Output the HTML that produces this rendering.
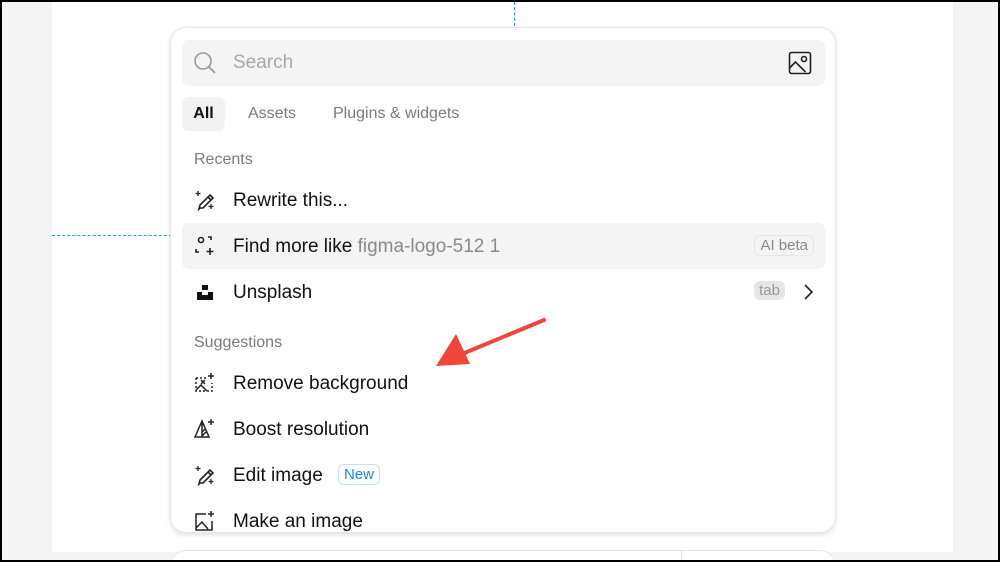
<!DOCTYPE html>
<html><head><meta charset="utf-8"><style>
*{margin:0;padding:0;box-sizing:border-box}
body{width:1000px;height:562px;overflow:hidden;background:#000;font-family:"Liberation Sans",sans-serif;position:relative}
.frame{position:absolute;left:2px;top:2px;width:996px;height:558px;background:#f4f4f4;overflow:hidden}
.white{position:absolute;left:50px;top:0;width:901px;height:550px;background:#fff}
.vd{position:absolute;left:512px;top:0;height:24px;border-left:1px dashed #1e9bf0}
.hd{position:absolute;left:50px;top:233px;width:120px;height:0;border-top:1px dashed #1e9bf0}
.card{position:absolute;left:168px;top:25px;width:666px;height:506px;background:#fff;border-radius:16px;border:1px solid #e6e6e6;box-shadow:0 2px 6px rgba(0,0,0,.12)}
.card2{position:absolute;left:168px;top:548px;width:666px;height:40px;background:#fff;border-radius:16px;border:1px solid #e6e6e6}
.card2:after{content:"";position:absolute;left:510px;top:0;height:40px;border-left:1px solid #e0e0e0}
.search{position:absolute;left:11px;top:12px;width:643px;height:46px;background:#f4f4f4;border-radius:7px}
.search .ph{position:absolute;left:51px;top:12px;font-size:19px;color:#a8a8a8}
.tabs{position:absolute;left:11px;top:69px;height:34px;width:400px}
.tab{position:absolute;top:0;height:34px;line-height:34px;font-size:16px;color:#7a7a7a;white-space:nowrap}
.all{left:0;width:43px;background:#f2f2f2;border-radius:7px;text-align:center;color:#111;font-weight:bold}
.sec{position:absolute;left:23px;font-size:16px;color:#7a7a7a}
.row{position:absolute;left:11px;width:643px;height:46px;border-radius:7px}
.row .t{position:absolute;left:51px;top:13px;font-size:19px;color:#111;white-space:nowrap}
.row svg{position:absolute;left:12px;top:12px}
.gray{color:#8a8a8a}
.badge{position:absolute;font-size:15px;border-radius:6px;padding:1px 5px}
</style></head><body><div class="frame">
<div class="white"></div>
<div class="vd"></div><div class="hd"></div>
<div class="card">
 <div class="search">
  <svg style="position:absolute;left:11px;top:11px" width="24" height="24" viewBox="0 0 24 24" fill="none" stroke="#999" stroke-width="1.6"><circle cx="10" cy="10" r="8"/><path d="M16 16l6 6"/></svg>
  <span class="ph">Search</span>
  <svg style="position:absolute;right:13px;top:11px" width="24" height="24" viewBox="0 0 24 24" fill="none" stroke="#222" stroke-width="1.6"><rect x="1.5" y="1.5" width="21" height="21" rx="2"/><circle cx="16" cy="8" r="2.5"/><path d="M1.5 17l6-6 10 10"/></svg>
 </div>
 <div class="tabs">
  <div class="tab all">All</div>
  <div class="tab" style="left:66px">Assets</div>
  <div class="tab" style="left:151px">Plugins &amp; widgets</div>
 </div>
 <div class="sec" style="top:123px">Recents</div>
 <div class="row" style="top:149px"><svg width="22" height="22" viewBox="0 0 22 22" fill="none" stroke="#222" stroke-width="1.6"><path d="M6 19l-1 1 1-4 10-10 3 3-10 10z M14 8l3 3"/><path d="M4 2v5M1.5 4.5h5M17 15v5M14.5 17.5h5" stroke-width="1.3"/></svg><span class="t">Rewrite this...</span></div>
 <div class="row" style="top:195px;background:#f4f4f4"><svg width="22" height="22" viewBox="0 0 22 22" fill="none" stroke="#222" stroke-width="1.6"><circle cx="7" cy="5" r="2.5"/><path d="M14 2h3v3M2 14v3h3M16 13v7M12.5 16.5h7"/></svg><span class="t">Find more like <span class="gray">figma-logo-512 1</span></span>
  <span class="badge" style="right:11px;top:12px;border:1px solid #e6e6e6;color:#888">AI beta</span></div>
 <div class="row" style="top:241px"><svg width="22" height="22" viewBox="0 0 22 22"><path d="M8 4h6v5H8zM3 11h5v3h6v-3h5v8H3z" fill="#111"/></svg><span class="t">Unsplash</span>
  <span class="badge" style="right:40px;top:12px;background:#e6e6e6;color:#999">tab</span>
  <svg style="left:auto;right:10px;top:14px" width="14" height="18" viewBox="0 0 14 18" fill="none" stroke="#222" stroke-width="1.6"><path d="M4 2l7 7-7 7"/></svg></div>
 <div class="sec" style="top:306px">Suggestions</div>
 <div class="row" style="top:332px"><svg width="22" height="22" viewBox="0 0 22 22" fill="none" stroke="#222" stroke-width="1.5"><path d="M2 6v13h16v-8" stroke-dasharray="2 2"/><path d="M2 6h10" stroke-dasharray="2 2"/><path d="M2 18l5-5 6 6M7 8l4 4M11 8l-4 4M17 1v6M14 4h6"/></svg><span class="t">Remove background</span></div>
 <div class="row" style="top:378px"><svg width="22" height="22" viewBox="0 0 22 22" fill="none" stroke="#222" stroke-width="1.5"><path d="M8 3L1 19h14zM8 3v16M11 11l-3 3M12 14l-4 4"/><path d="M17 1v6M14 4h6"/></svg><span class="t">Boost resolution</span></div>
 <div class="row" style="top:424px"><svg width="22" height="22" viewBox="0 0 22 22" fill="none" stroke="#222" stroke-width="1.6"><path d="M6 19l-1 1 1-4 10-10 3 3-10 10z M14 8l3 3"/><path d="M4 2v5M1.5 4.5h5M17 15v5M14.5 17.5h5" stroke-width="1.3"/></svg><span class="t">Edit image</span>
  <span class="badge" style="left:156px;top:12px;border:1px solid #bfe0fb;color:#1e88e5">New</span></div>
 <div class="row" style="top:470px"><svg width="22" height="22" viewBox="0 0 22 22" fill="none" stroke="#222" stroke-width="1.5"><path d="M12 4H2v16h16v-9"/><path d="M2 18l6-6 6 7"/><path d="M17 1v6M14 4h6"/></svg><span class="t">Make an image</span></div>
</div>
<div class="card2"></div>
<svg style="position:absolute;left:430px;top:314px" width="120" height="60" viewBox="0 0 120 60"><path d="M112 4L30 38" stroke="#f1453b" stroke-width="4" stroke-linecap="round"/><path d="M4 50L24 18 38 48z" fill="#f1453b"/></svg>
</div></body></html>
